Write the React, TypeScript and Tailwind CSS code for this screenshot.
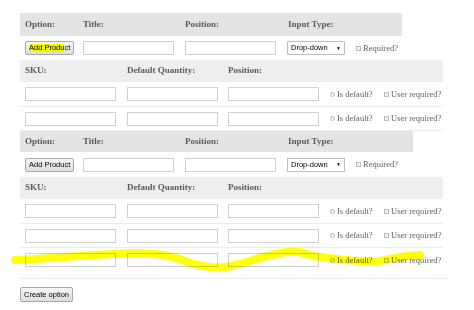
import React from 'react';

const serif = "font-['Liberation_Serif',serif]";
const sans = "font-['Liberation_Sans',Arial,sans-serif]";

function Btn({ children, h = 'h-[14px]' }: { children: React.ReactNode; h?: string }) {
  return (
    <button
      type="button"
      className={`${sans} ${h} flex items-center px-[3px] text-[7.5px] leading-none text-black bg-linear-to-b from-[#f7f7f7] to-[#dddddd] border border-[#a8a8a8] rounded-[2px]`}
    >
      {children}
    </button>
  );
}

function TextBox() {
  return <div className="w-[91px] h-[14px] bg-white border border-[#cfcfcf]" />;
}

function Check({ label }: { label: string }) {
  return (
    <span className="flex items-center gap-[2px] text-[8.5px] leading-none text-[#5f5f5f]">
      <span className="w-[5px] h-[5px] border border-[#bbb] bg-[#f2f2f2]" />
      {label}
    </span>
  );
}

function Radio({ label }: { label: string }) {
  return (
    <span className="flex items-center gap-[2px] text-[8.5px] leading-none text-[#5f5f5f]">
      <span className="w-[5px] h-[5px] rounded-full border border-[#bbb] bg-[#eee]" />
      {label}
    </span>
  );
}

type BlockProps = {
  headerWidth: string;
  headerHeight: string;
  optionRowHeight: string;
  rowHeights: string[];
  highlight?: boolean;
};

function OptionBlock({ headerWidth, headerHeight, optionRowHeight, rowHeights, highlight }: BlockProps) {
  return (
    <div>
      {/* option header */}
      <div className={`${headerWidth} ${headerHeight} bg-[#e4e4e4] flex items-center pl-[5px] text-[9px] font-bold text-[#5a5a5a]`}>
        <span className="w-[58px]">Option:</span>
        <span className="w-[102px]">Title:</span>
        <span className="w-[103px]">Position:</span>
        <span>Input Type:</span>
      </div>
      {/* option row */}
      <div className={`${optionRowHeight} flex items-center pl-[5px]`}>
        <div className="w-[58px] flex items-center">
          <Btn>
            {highlight ? (
              <>
                <span className="bg-[#f6f600]">Add Produ</span>ct
              </>
            ) : (
              'Add Product'
            )}
          </Btn>
        </div>
        <div className="w-[102px] flex items-center">
          <TextBox />
        </div>
        <div className="w-[102px] flex items-center">
          <TextBox />
        </div>
        <div className="w-[69px] flex items-center">
          <div className={`${sans} w-[58px] h-[14px] bg-white border border-[#bdbdbd] flex items-center justify-between px-[3px] text-[7.5px] leading-none text-black`}>
            <span>Drop-down</span>
            <span className="text-[5px]">▼</span>
          </div>
        </div>
        <Check label="Required?" />
      </div>
      {/* SKU header */}
      <div className="w-[423px] h-[22px] bg-[#eeeeee] flex items-center pl-[5px] text-[9px] font-bold text-[#5a5a5a]">
        <span className="w-[102px]">SKU:</span>
        <span className="w-[101px]">Default Quantity:</span>
        <span>Position:</span>
      </div>
      {rowHeights.map((h, i) => {
        const last = i === rowHeights.length - 1 && rowHeights.length === 3;
        return (
          <div
            key={i}
            className={`${h} flex pl-[5px] border-b border-[#ececec] ${
              last ? 'w-[428px] items-start pt-[5px]' : 'w-[423px] items-center'
            }`}
          >
            <div className="w-[102px] flex">
              <TextBox />
            </div>
            <div className="w-[101px] flex">
              <TextBox />
            </div>
            <div className="w-[102px] flex">
              <TextBox />
            </div>
            <div className="w-[54px] h-[14px] flex items-center">
              <Radio label="Is default?" />
            </div>
            <div className="h-[14px] flex items-center">
              <Check label="User required?" />
            </div>
          </div>
        );
      })}
    </div>
  );
}

export default function App() {
  return (
    <div className={`${serif} relative w-[474px] h-[310px] bg-white overflow-hidden`}>
      <div className="pl-[20px] pt-[13px]">
        <OptionBlock
          headerWidth="w-[382px]"
          headerHeight="h-[23px]"
          optionRowHeight="h-[24px]"
          rowHeights={['h-[25px]', 'h-[24px]']}
          highlight
        />
        <OptionBlock
          headerWidth="w-[393px]"
          headerHeight="h-[21px]"
          optionRowHeight="h-[25px]"
          rowHeights={['h-[25px]', 'h-[24px]', 'h-[31px]']}
        />
        <div className="mt-[8px] flex">
          <Btn h="h-[15px]">Create option</Btn>
        </div>
      </div>

      {/* highlighter scribble over the last row */}
      <svg className="absolute inset-0 pointer-events-none mix-blend-multiply" width="474" height="310" viewBox="0 0 474 310">
        <path
          d="M15 260 C40 259, 60 257, 80 256 S120 253, 135 253 S170 255, 185 261 S215 268, 225 267 S260 257, 280 253 S305 255, 320 257 S355 261, 368 262 S392 256, 420 255"
          fill="none"
          stroke="#ffff00"
          strokeWidth="8"
          strokeLinecap="round"
          strokeLinejoin="round"
          opacity="0.95"
        />
      </svg>
    </div>
  );
}
